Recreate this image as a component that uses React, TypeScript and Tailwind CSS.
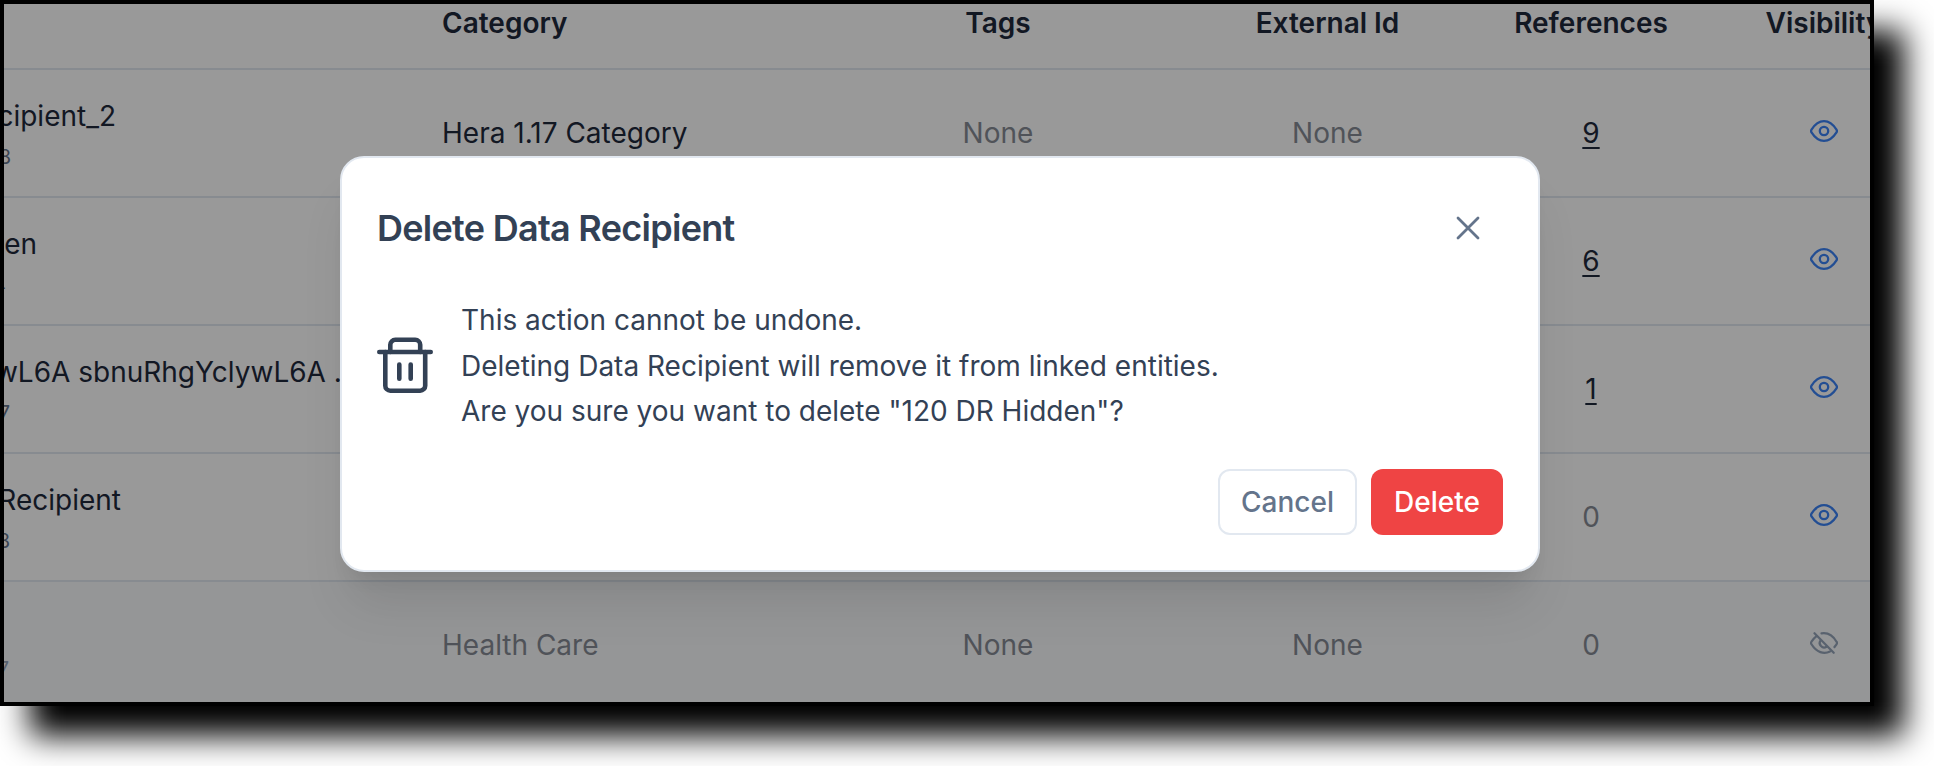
type Recipient = {
    name: string;
    code: string;
    nameWidth: string;
    codeWidth: string;
    category?: string;
    references: number;
    hidden?: boolean;
};

const recipients: Recipient[] = [
    { name: 'cipient_2', code: '8', nameWidth: 'w-[112px]', codeWidth: 'w-[7px]', category: 'Hera 1.17 Category', references: 9 },
    { name: 'en', code: '4', nameWidth: 'w-[33px]', codeWidth: 'w-[2px]', references: 6 },
    { name: 'wL6A sbnuRhgYclywL6A ...', code: '7', nameWidth: 'w-[354px]', codeWidth: 'w-[6px]', references: 1 },
    { name: 'Recipient', code: '8', nameWidth: 'w-[117px]', codeWidth: 'w-[6px]', references: 0 },
    { name: '', code: '7', nameWidth: 'w-[100px]', codeWidth: 'w-[5px]', category: 'Health Care', references: 0, hidden: true },
];

const EyeIcon = () => (
    <svg width="28" height="22" viewBox="0 0 28 22" fill="none" stroke="currentColor" strokeWidth="2.3" className="text-[#3b82f6]">
        <path d="M1.5 12.3a2.2 2.2 0 0 1 0-2.6C5 4.2 9 1.2 14 1.2s9 3 12.500 8.500a2.200 2.200 0 0 1 0 2.600C23 17.800 19 20.800 14 20.800S5 17.800 1.500 12.300Z" />
        <circle cx="14" cy="11" r="4.2" />
    </svg>
);

const EyeOffIcon = () => (
    <svg width="28" height="22" viewBox="0 0 28 22" fill="none" stroke="currentColor" strokeWidth="2.2" strokeLinecap="round" className="text-[#94a3b8]">
        <path d="M11.5 1.4C18 .3 23 3.8 26.5 9.7a2.2 2.2 0 0 1 0 2.6l-2 2.7" />
        <path d="M6.5 4.2C4.5 5.7 3 7.5 1.5 9.7a2.2 2.2 0 0 0 0 2.6C6.5 20.500 14 22.500 20 19.500" />
        <path d="M10.500 8.500a4.400 4.400 0 0 0 6 6.200" />
        <path d="M4.500 1.200 23.700 20.800" />
    </svg>
);

const TrashIcon = () => (
    <svg width="56" height="56" viewBox="0 0 56 56" fill="none" stroke="currentColor" strokeWidth="4.6" strokeLinecap="round" strokeLinejoin="round">
        <path d="M2.300 15h51.400" />
        <path d="M13.300 15V7.800a5 5 0 0 1 5-5h19.900a5 5 0 0 1 5 5V15" />
        <path d="M8.300 15v33.700a5 5 0 0 0 5 5h29.900a5 5 0 0 0 5-5V15" />
        <path d="M22.300 27.500v14.200M33.700 27.500v14.200" />
    </svg>
);

const RecipientRow = ({ row }: { row: Recipient }) => (
    <div className={`flex h-32 items-center border-b-2 border-[#e2e8f0] ${row.hidden ? 'bg-[#f8fafc]' : ''}`}>
        <div className="w-[438px] shrink-0 self-start pt-[26px]">
            <div className={`flex h-10 items-center justify-end overflow-hidden whitespace-nowrap text-[#1e293b] ${row.nameWidth}`}>
                {row.name}
            </div>
            <div className={`mt-px flex h-10 items-center justify-end overflow-hidden text-[20px] ${row.hidden ? 'text-[#94a3b8]' : 'text-[#64748b]'} ${row.codeWidth}`}>
                {row.code}
            </div>
        </div>
        <div className={`w-[391px] shrink-0 ${row.hidden ? 'text-[#868b94]' : 'text-[#1e293b]'}`}>{row.category}</div>
        <div className="w-[330px] shrink-0 text-center text-[#868b94]">None</div>
        <div className="w-[329px] shrink-0 text-center text-[#868b94]">None</div>
        <div className="w-[198px] shrink-0 text-center">
            {row.references > 0 ? (
                <span className="text-[#1e293b] underline decoration-2 underline-offset-4">{row.references}</span>
            ) : (
                <span className="text-[#868b94]">0</span>
            )}
        </div>
        <div className="flex w-[268px] shrink-0 justify-center pb-[5px]">{row.hidden ? <EyeOffIcon /> : <EyeIcon />}</div>
    </div>
);

export default function App() {
    return (
        <div className="h-[766px] w-[1934px] overflow-hidden bg-white font-['Inter',sans-serif] text-[28px] leading-10">
            <div className="relative h-[706px] w-[1874px] border-4 border-black bg-white shadow-[30px_30px_30px_#000]">
                {/* Recipients table */}
                <div className="h-full overflow-hidden">
                    <div className="flex h-[66px] border-b-2 border-[#e2e8f0] font-semibold leading-[38px] text-[#1e293b]">
                        <div className="w-[438px] shrink-0" />
                        <div className="w-[391px] shrink-0">Category</div>
                        <div className="w-[330px] shrink-0 text-center">Tags</div>
                        <div className="w-[329px] shrink-0 text-center">External Id</div>
                        <div className="w-[198px] shrink-0 text-center">References</div>
                        <div className="w-[268px] shrink-0 text-center">Visibility</div>
                    </div>
                    {recipients.map((row, index) => (
                        <RecipientRow key={index} row={row} />
                    ))}
                </div>

                {/* Delete dialog */}
                <div className="absolute inset-0 bg-black/40">
                    <div
                        role="dialog"
                        className="ml-[336px] mt-[152px] flex h-[416px] w-[1200px] flex-col rounded-3xl border-2 border-[#e2e8f0] bg-white px-[35px] pb-[35px] text-[#334155] shadow-[0_40px_50px_-10px_rgba(0,0,0,0.1),0_16px_20px_-12px_rgba(0,0,0,0.1)]"
                    >
                        <div className="flex h-[140px] items-center justify-between pr-[23px]">
                            <h2 className="text-[36px] font-semibold tracking-[-0.02em]">Delete Data Recipient</h2>
                            <button aria-label="Close" className="text-[#64748b]">
                                <svg width="24" height="24" viewBox="0 0 24 24" fill="none" stroke="currentColor" strokeWidth="2.8" strokeLinecap="round">
                                    <path d="M2 2l20 20M22 2 2 22" />
                                </svg>
                            </button>
                        </div>
                        <div className="flex items-center gap-[28px]">
                            <div className="pb-[2px]">
                                <TrashIcon />
                            </div>
                            <div className="leading-[45.5px]">
                                <p>This action cannot be undone.</p>
                                <p>Deleting Data Recipient will remove it from linked entities.</p>
                                <p>Are you sure you want to delete "120 DR Hidden"?</p>
                            </div>
                        </div>
                        <div className="mt-auto flex justify-end gap-[14px] font-medium">
                            <button className="h-[66px] w-[139px] rounded-xl border-2 border-[#e2e8f0] text-[#64748b]">Cancel</button>
                            <button className="h-[66px] w-[132px] rounded-xl bg-[#ef4444] text-white">Delete</button>
                        </div>
                    </div>
                </div>
            </div>
        </div>
    );
}
